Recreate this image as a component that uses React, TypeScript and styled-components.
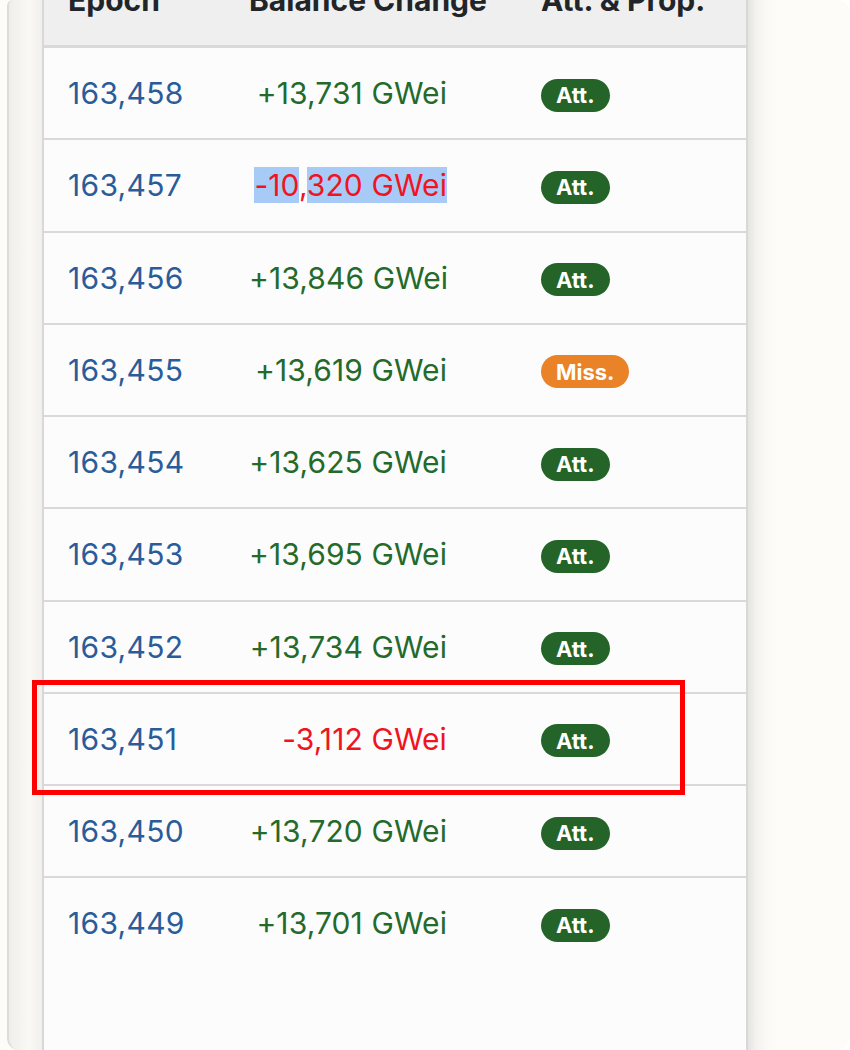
import React from "react";
import styled, { createGlobalStyle } from "styled-components";

const Global = createGlobalStyle`
  html, body { margin: 0; padding: 0; background: #ffffff; }
  body { font-family: Inter, "Noto Sans", "Liberation Sans", sans-serif; overflow: hidden; }
`;

const Frame = styled.div`
  position: relative;
  width: 850px;
  height: 1050px;
  display: flex;
  background: #fdfcf8;
  border-radius: 0 14px 14px 0;
  overflow: hidden;
`;

const Gutter = styled.div`
  width: 33px;
  margin-left: 7px;
  flex: none;
  border-left: 2px solid #dcdcdb;
  border-radius: 6px 0 0 12px;
  background: linear-gradient(to right, #eeeeec 0, #f6f5f2 40%, #faf9f5 60%, #f0efec 100%);
`;

const Panel = styled.div`
  width: 702px;
  flex: none;
  background: #fcfcfc;
  border-left: 2px solid #d8d8d8;
  border-right: 2px solid #d8d8d8;
`;

const Shade = styled.div`
  flex: 1;
  background: linear-gradient(to right, #e4e4e2 0, #f3f2ef 8px, #fbfaf6 20px, #fdfcf8 30px);
`;

const grid = `
  display: grid;
  grid-template-columns: 181px 292px 1fr;
  padding-left: 24px;
`;

const HeadRow = styled.div`
  ${grid}
  height: 45px;
  background: #efefef;
  border-bottom: 3px solid #dcd8da;
  overflow: hidden;
`;

const HeadCell = styled.div`
  font-size: 30px;
  font-weight: 700;
  color: #212529;
  line-height: 36px;
  margin-top: -18px;
  white-space: nowrap;
`;

const Row = styled.div<{ $last?: boolean }>`
  ${grid}
  height: 90.25px;
  align-items: center;
  border-bottom: 2px solid ${(p) => (p.$last ? "transparent" : "#dcd8da")};
`;

const EpochCell = styled.div`
  font-size: 30px;
  letter-spacing: 0.3px;
  color: #2b5c9a;
  white-space: nowrap;
`;

const BalanceCell = styled.div<{ $neg?: boolean }>`
  font-size: 30px;
  letter-spacing: 0.1px;
  text-align: right;
  padding-right: 94px;
  white-space: nowrap;
  color: ${(p) => (p.$neg ? "#f0141f" : "#236a2b")};
`;

const Sel = styled.span`
  background: #a8caf7;
`;

const BadgeCell = styled.div`
  display: flex;
  align-items: center;
  padding-top: 4px;
`;

const Badge = styled.span<{ $miss?: boolean }>`
  display: inline-flex;
  align-items: center;
  justify-content: center;
  height: 33px;
  padding: 0 15px;
  border-radius: 17px;
  font-size: 22px;
  font-weight: 700;
  white-space: nowrap;
  color: #ffffff;
  background: ${(p) => (p.$miss ? "#ea8227" : "#246429")};
`;

const Annotation = styled.div`
  position: absolute;
  left: 32px;
  top: 680px;
  width: 643px;
  height: 105px;
  border: 5px solid #ff0000;
  pointer-events: none;
`;

type R = { epoch: string; bal: string; neg?: boolean; miss?: boolean; sel?: boolean };

const rows: R[] = [
  { epoch: "163,458", bal: "+13,731 GWei" },
  { epoch: "163,457", bal: "-10,320 GWei", neg: true, sel: true },
  { epoch: "163,456", bal: "+13,846 GWei" },
  { epoch: "163,455", bal: "+13,619 GWei", miss: true },
  { epoch: "163,454", bal: "+13,625 GWei" },
  { epoch: "163,453", bal: "+13,695 GWei" },
  { epoch: "163,452", bal: "+13,734 GWei" },
  { epoch: "163,451", bal: "-3,112 GWei", neg: true },
  { epoch: "163,450", bal: "+13,720 GWei" },
  { epoch: "163,449", bal: "+13,701 GWei" },
];

export default function App() {
  return (
    <>
      <Global />
      <Frame>
        <Gutter />
        <Panel>
          <HeadRow>
            <HeadCell>Epoch</HeadCell>
            <HeadCell>Balance Change</HeadCell>
            <HeadCell>Att. &amp; Prop.</HeadCell>
          </HeadRow>
          {rows.map((r, i) => (
            <Row key={r.epoch} $last={i === rows.length - 1}>
              <EpochCell>{r.epoch}</EpochCell>
              <BalanceCell $neg={r.neg}>
                {r.sel ? (
                  <>
                    <Sel>-10</Sel>,<Sel>320 GWei</Sel>
                  </>
                ) : (
                  r.bal
                )}
              </BalanceCell>
              <BadgeCell>
                <Badge $miss={r.miss}>{r.miss ? "Miss." : "Att."}</Badge>
              </BadgeCell>
            </Row>
          ))}
        </Panel>
        <Shade />
        <Annotation />
      </Frame>
    </>
  );
}
